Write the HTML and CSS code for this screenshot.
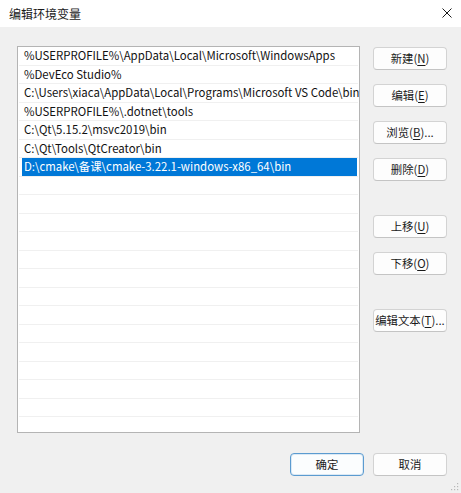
FILE: index.html
```html
<!DOCTYPE html>
<html lang="zh-CN">
<head>
<meta charset="utf-8">
<title>编辑环境变量</title>
<link rel="stylesheet" href="styles.css">
</head>
<body>
<div class="window">
  <div class="titlebar">
    <span class="title">编辑环境变量</span>
    <svg class="close" width="10" height="10" viewBox="0 0 10 10"><path d="M0.5 0.5 L9.5 9.5 M9.5 0.5 L0.5 9.5" stroke="#1a1a1a" stroke-width="1" fill="none"/></svg>
  </div>
  <div class="content">
    <div class="main">
      <div class="list">
        <div class="row"><span class="cell">%USERPROFILE%\AppData\Local\Microsoft\WindowsApps</span></div>
        <div class="row"><span class="cell">%DevEco Studio%</span></div>
        <div class="row"><span class="cell">C:\Users\xiaca\AppData\Local\Programs\Microsoft VS Code\bin</span></div>
        <div class="row"><span class="cell">%USERPROFILE%\.dotnet\tools</span></div>
        <div class="row"><span class="cell">C:\Qt\5.15.2\msvc2019\bin</span></div>
        <div class="row"><span class="cell">C:\Qt\Tools\QtCreator\bin</span></div>
        <div class="row selected"><span class="cell">D:\cmake\备课\cmake-3.22.1-windows-x86_64\bin</span></div>
        <div class="row"><span class="cell"></span></div>
        <div class="row"><span class="cell"></span></div>
        <div class="row"><span class="cell"></span></div>
        <div class="row"><span class="cell"></span></div>
        <div class="row"><span class="cell"></span></div>
        <div class="row"><span class="cell"></span></div>
        <div class="row"><span class="cell"></span></div>
        <div class="row"><span class="cell"></span></div>
        <div class="row"><span class="cell"></span></div>
        <div class="row"><span class="cell"></span></div>
        <div class="row"><span class="cell"></span></div>
        <div class="row"><span class="cell"></span></div>
        <div class="row"><span class="cell"></span></div>
        <div class="row"><span class="cell"></span></div>
        <div class="row"><span class="cell"></span></div>
      </div>
      <div class="side">
        <button class="btn">新建(<u>N</u>)</button>
        <button class="btn">编辑(<u>E</u>)</button>
        <button class="btn">浏览(<u>B</u>)...</button>
        <button class="btn">删除(<u>D</u>)</button>
        <button class="btn group">上移(<u>U</u>)</button>
        <button class="btn">下移(<u>O</u>)</button>
        <button class="btn group">编辑文本(<u>T</u>)...</button>
      </div>
    </div>
    <div class="footer">
      <button class="btn default">确定</button>
      <button class="btn">取消</button>
    </div>
  </div>
  <svg class="grip" width="8" height="8" viewBox="0 0 8 8">
    <rect x="6" y="0" width="1.2" height="1.2" fill="#b8b8b8"/>
    <rect x="3" y="3" width="1.2" height="1.2" fill="#b8b8b8"/>
    <rect x="6" y="3" width="1.2" height="1.2" fill="#b8b8b8"/>
    <rect x="0" y="6" width="1.2" height="1.2" fill="#b8b8b8"/>
    <rect x="3" y="6" width="1.2" height="1.2" fill="#b8b8b8"/>
    <rect x="6" y="6" width="1.2" height="1.2" fill="#b8b8b8"/>
  </svg>
</div>
</body>
</html>
```
FILE: styles.css
```css
* { box-sizing: border-box; }
html, body { margin: 0; padding: 0; }
body {
  font-family: "Noto Sans CJK SC", "Noto Sans", sans-serif;
  font-size: 12px;
  color: #000;
  background: #f0f0f0;
}
.window {
  position: relative;
  width: 461px;
  height: 493px;
  background: #f0f0f0;
  overflow: hidden;
}
.titlebar {
  height: 27px;
  background: #ffffff;
  display: flex;
  align-items: center;
  justify-content: space-between;
  padding: 0 9px 0 9px;
}
.title {
  font-size: 12px;
  color: #1a1a1a;
  line-height: 1;
}
.close { margin-top: -1px; }
.content {
  padding: 19px 14px 0 17px;
}
.main {
  display: flex;
  gap: 13px;
}
.list {
  width: 343px;
  height: 387px;
  background: #fff;
  border: 1px solid #b4b4b4;
  overflow: hidden;
  padding: 0 1px;
}
.row {
  height: 18.5px;
  border-bottom: 1px solid #f0f0f0;
  display: flex;
  align-items: stretch;
}
.cell {
  flex: 1;
  padding-left: 2px;
  margin-left: 3px;
  margin-right: 1px;
  font-size: 11.4px;
  line-height: 17.5px;
  white-space: nowrap;
  color: #111;
}
.row.selected .cell {
  background: #0078d7;
  color: #fff;
}
.side {
  display: flex;
  flex-direction: column;
  gap: 14px;
  padding-top: 1px;
}
.btn {
  width: 74px;
  height: 23px;
  padding: 0;
  font-family: inherit;
  font-size: 11.4px;
  color: #1a1a1a;
  background: #fdfdfd;
  border: 1px solid #d3d3d3;
  border-bottom-color: #c4c4c4;
  border-radius: 4px;
  line-height: 1;
  white-space: nowrap;
}
.btn u { text-underline-offset: 2px; }
.btn.group { margin-top: 20px; }
.footer {
  display: flex;
  justify-content: flex-end;
  gap: 9px;
  margin-top: 20px;
}
.btn.default {
  background: #fbfdfe;
  border: 1px solid #5b9bd0;
  box-shadow: inset 0 0 0 1px #dbe9f5;
}
.grip {
  position: absolute;
  right: 2px;
  bottom: 2px;
}
```
